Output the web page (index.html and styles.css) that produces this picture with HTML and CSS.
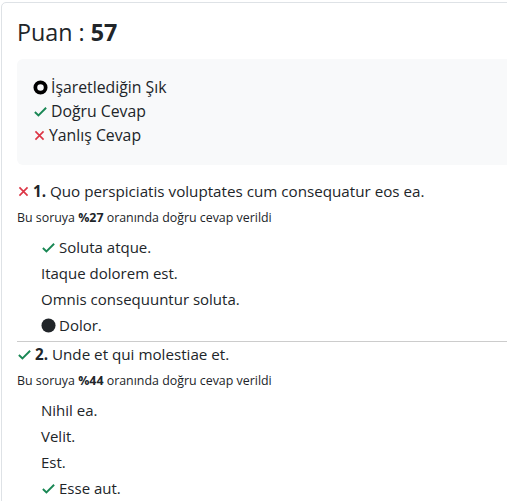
FILE: index.html
```html
<!DOCTYPE html>
<html lang="tr">
<head>
<meta charset="utf-8">
<link rel="stylesheet" href="styles.css">
</head>
<body>
<div class="card">
  <h1 class="title">Puan : <strong>57</strong></h1>
  <div class="legend">
    <div class="legend-row"><svg class="ic" viewBox="0 0 16 16"><circle cx="8" cy="8" r="5.5" fill="none" stroke="#000" stroke-width="4"/></svg>İşaretlediğin Şık</div>
    <div class="legend-row"><svg class="ic" viewBox="0 0 16 16"><path d="M2 8.5l3.8 3.8L14 4" fill="none" stroke="#198754" stroke-width="2"/></svg>Doğru Cevap</div>
    <div class="legend-row"><svg class="ic ic-x" viewBox="0 0 16 16"><path d="M3 3l10 10M13 3L3 13" fill="none" stroke="#dc3545" stroke-width="2"/></svg>Yanlış Cevap</div>
  </div>

  <div class="question first">
    <div class="q-title"><svg class="ic ic-x" viewBox="0 0 16 16"><path d="M3 3l10 10M13 3L3 13" fill="none" stroke="#dc3545" stroke-width="2"/></svg><strong>1.</strong>&nbsp;Quo perspiciatis voluptates cum consequatur eos ea.</div>
    <div class="stat">Bu soruya <strong>%27</strong> oranında doğru cevap verildi</div>
    <ul class="options">
      <li><svg class="ic" viewBox="0 0 16 16"><path d="M2 8.5l3.8 3.8L14 4" fill="none" stroke="#198754" stroke-width="2"/></svg>Soluta atque.</li>
      <li>Itaque dolorem est.</li>
      <li>Omnis consequuntur soluta.</li>
      <li><svg class="ic" viewBox="0 0 16 16"><circle cx="8" cy="8" r="7.5" fill="#212529"/></svg>Dolor.</li>
    </ul>
  </div>
  <hr class="sep">
  <div class="question">
    <div class="q-title"><svg class="ic" viewBox="0 0 16 16"><path d="M2 8.5l3.8 3.8L14 4" fill="none" stroke="#198754" stroke-width="2"/></svg><strong>2.</strong>&nbsp;Unde et qui molestiae et.</div>
    <div class="stat">Bu soruya <strong>%44</strong> oranında doğru cevap verildi</div>
    <ul class="options">
      <li>Nihil ea.</li>
      <li>Velit.</li>
      <li>Est.</li>
      <li><svg class="ic" viewBox="0 0 16 16"><path d="M2 8.5l3.8 3.8L14 4" fill="none" stroke="#198754" stroke-width="2"/></svg>Esse aut.</li>
    </ul>
  </div>
</div>
</body>
</html>
```
FILE: styles.css
```css
html, body {
  margin: 0;
  padding: 0;
  background: #fff;
  overflow: hidden;
}
body {
  font-family: "Open Sans", "Noto Sans", sans-serif;
  color: #212529;
  font-size: 15px;
  line-height: 24px;
}
.card {
  margin: 2px 0 0 1px;
  width: 560px;
  border: 1px solid #dee2e6;
  border-radius: 5px;
  padding: 15px 15px 16px 15px;
  box-sizing: border-box;
  height: 600px;
}
.title {
  margin: 0 0 12px 0;
  font-size: 23.3px;
  font-weight: 400;
  line-height: 29px;
}
.title strong { font-weight: 700; }
.legend {
  background: #f8f9fa;
  border-radius: 6px;
  padding: 16px 16px 18px 16px;
  font-size: 15.8px;
}
.legend-row {
  display: flex;
  align-items: center;
  height: 24px;
}
.ic {
  width: 15px;
  height: 15px;
  margin-right: 3px;
  flex: none;
}
.ic-x { width: 13px; height: 13px; margin-right: 3px; }
.question.first { margin-top: 14px; }
.q-title {
  display: flex;
  align-items: center;
  height: 24px;
  font-size: 15.2px;
}
.q-title strong { font-weight: 700; }
.stat {
  font-size: 12.4px;
  line-height: 18px;
  margin-top: 6px;
}
.stat strong { font-weight: 700; }
.options {
  list-style: none;
  margin: 7px 0 0 0;
  padding: 0 0 0 24px;
}
.options li {
  display: flex;
  align-items: center;
  height: 26px;
}
.sep {
  margin: 3px 0 0 0;
  border: 0;
  border-top: 1px solid #ccc;
}
```
